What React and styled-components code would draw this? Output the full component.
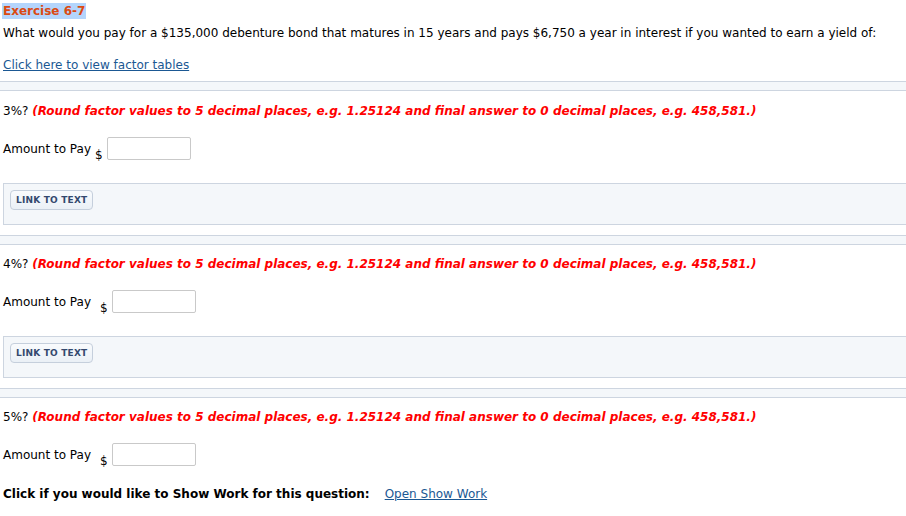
import React from 'react';
import styled, { createGlobalStyle } from 'styled-components';

const GlobalStyle = createGlobalStyle`
  html, body {
    margin: 0;
    padding: 0;
    background: #ffffff;
  }
  body {
    font-family: "DejaVu Sans", Verdana, sans-serif;
    font-size: 12px;
    color: #000;
  }
`;

const Page = styled.div`
  width: 906px;
  overflow: hidden;
  padding-top: 3px;
`;

const Inner = styled.div`
  padding-left: 3px;
`;

const Title = styled.span`
  display: inline-block;
  margin-left: -1px;
  padding: 1px 1px 0 1px;
  height: 15px;
  line-height: 15px;
  background: #b4d5fc;
  color: #db4a12;
  font-weight: bold;
  font-size: 12px;
`;

const Question = styled.p`
  margin: 6px 0 0 0;
  line-height: 16px;
`;

const TextLink = styled.a`
  color: #1b5893;
  text-decoration: underline;
  cursor: pointer;
`;

const FactorLink = styled.div`
  margin-top: 16px;
  line-height: 16px;
`;

const Separator = styled.div`
  height: 8px;
  border-top: 1px solid #cdd5e0;
  border-bottom: 1px solid #cdd5e0;
  background: #f4f7fa;
  margin-top: ${({ top }) => top}px;
`;

const Part = styled.div`
  padding-left: 3px;
`;

const Prompt = styled.div`
  margin-top: ${({ top }) => top}px;
  line-height: 16px;
`;

const Hint = styled.span`
  color: #ff0000;
  font-weight: bold;
  font-style: italic;
`;

const AnswerRow = styled.div`
  display: flex;
  align-items: flex-start;
  margin-top: 18px;
  height: 23px;
`;

const Label = styled.span`
  line-height: 16px;
  margin-top: 4px;
`;

const Dollar = styled.span`
  line-height: 16px;
  margin-top: 10px;
  margin-left: ${({ gap }) => gap}px;
  margin-right: 4px;
`;

const AmountInput = styled.input`
  width: 78px;
  height: 21px;
  padding: 0 2px;
  border: 1px solid #c9c9c9;
  border-radius: 2px;
  font-family: inherit;
  font-size: 12px;
  box-sizing: content-box;
  outline: none;
`;

const LinkBox = styled.div`
  margin-top: 23px;
  height: 42px;
  border: 1px solid #cdd5e0;
  border-right: none;
  background: #f4f7fa;
  margin-left: 3px;
  padding: 6px 0 0 6px;
  box-sizing: border-box;
`;

const LinkButton = styled.button`
  height: 20px;
  padding: 0 5px;
  border: 1px solid #c5cfdc;
  border-radius: 4px;
  background: linear-gradient(#f9fbfd, #eaf0f6);
  color: #34496e;
  font-family: "DejaVu Sans", Verdana, sans-serif;
  font-size: 9px;
  font-weight: bold;
  letter-spacing: 0.2px;
  cursor: pointer;
`;

const ShowWork = styled.div`
  margin-top: 20px;
  padding-left: 3px;
  line-height: 16px;
  display: flex;
`;

const Strong = styled.span`
  font-weight: bold;
  margin-right: 15px;
`;

const hint =
  '(Round factor values to 5 decimal places, e.g. 1.25124 and final answer to 0 decimal places, e.g. 458,581.)';

const parts = [
  { rate: '3%?', gap: 4, link: true, sepTop: 8, promptTop: 12 },
  { rate: '4%?', gap: 9, link: true, sepTop: 10, promptTop: 11 },
  { rate: '5%?', gap: 9, link: false, sepTop: 10, promptTop: 11 },
];

function QuestionPart({ rate, gap, link, promptTop }) {
  return (
    <>
      <Part>
        <Prompt top={promptTop}>
          {rate} <Hint>{hint}</Hint>
        </Prompt>
        <AnswerRow>
          <Label>Amount to Pay</Label>
          <Dollar gap={gap}>$</Dollar>
          <AmountInput type="text" />
        </AnswerRow>
      </Part>
      {link && (
        <LinkBox>
          <LinkButton>LINK TO TEXT</LinkButton>
        </LinkBox>
      )}
    </>
  );
}

export default function App() {
  return (
    <>
      <GlobalStyle />
      <Page>
        <Inner>
          <Title>Exercise 6-7</Title>
          <Question>
            What would you pay for a $135,000 debenture bond that matures in 15 years and pays $6,750 a
            year in interest if you wanted to earn a yield of:
          </Question>
          <FactorLink>
            <TextLink>Click here to view factor tables</TextLink>
          </FactorLink>
        </Inner>
        {parts.map((p) => (
          <React.Fragment key={p.rate}>
            <Separator top={p.sepTop} />
            <QuestionPart {...p} />
          </React.Fragment>
        ))}
        <ShowWork>
          <Strong>Click if you would like to Show Work for this question:</Strong>
          <TextLink>Open Show Work</TextLink>
        </ShowWork>
      </Page>
    </>
  );
}
